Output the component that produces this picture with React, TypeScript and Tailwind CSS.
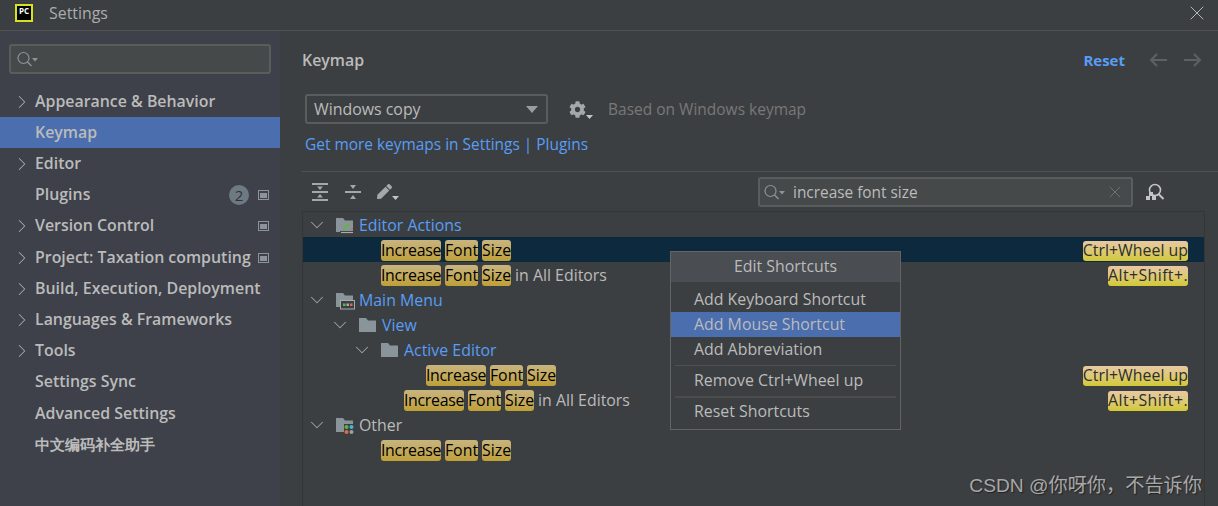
import { ChevronDown, ChevronRight, X } from "lucide-react";
import { FaCog, FaPen } from "react-icons/fa";

const font = { sans: "font-['Open_Sans',sans-serif]" };

const navItems = [
  { label: "Appearance & Behavior", arrow: true },
  { label: "Keymap", active: true },
  { label: "Editor", arrow: true },
  { label: "Plugins", badge: true, box: true },
  { label: "Version Control", arrow: true, box: true },
  { label: "Project: Taxation computing", arrow: true, box: true },
  { label: "Build, Execution, Deployment", arrow: true },
  { label: "Languages & Frameworks", arrow: true },
  { label: "Tools", arrow: true },
  { label: "Settings Sync" },
  { label: "Advanced Settings" },
  { label: "中文编码补全助手", cjk: true },
];

function SearchGlyph() {
  return (
    <svg width="24" height="18" viewBox="0 0 24 18" fill="none" className="shrink-0">
      <circle cx="7.5" cy="8" r="5.5" stroke="#8f9396" strokeWidth="1.2" />
      <path d="M11.5 12 15.5 16" stroke="#8f9396" strokeWidth="1.5" />
      <path d="M16 8h6l-3 3.5z" fill="#8f9396" />
    </svg>
  );
}

function BoxGlyph() {
  return (
    <svg width="11" height="10" viewBox="0 0 11 10" className="shrink-0">
      <rect x="0.5" y="0.5" width="10" height="9" fill="none" stroke="#8d9499" />
      <rect x="2" y="3" width="7" height="5" fill="#8d9499" />
    </svg>
  );
}

function Folder({ badge }: { badge?: "edit" | "menu" | "other" }) {
  return (
    <svg width="20" height="18" viewBox="0 0 20 18" className="shrink-0">
      <path d="M1 1h7l2 2.5h8V15H1z" fill="#8a949b" />
      {badge === "edit" && (
        <>
          <rect x="5" y="14" width="13" height="3.5" fill="#3c3f41" />
          <path d="M6 15.5h12" stroke="#a5acb1" strokeWidth="1.2" />
          <path d="M8 13 15 6" stroke="#62b543" strokeWidth="2" />
          <path d="M15 13h3v-2z" fill="#e0694a" />
        </>
      )}
      {badge === "menu" && (
        <>
          <rect x="5" y="8" width="15" height="10" fill="#3c3f41" />
          <rect x="5.5" y="8.5" width="14" height="8.5" fill="none" stroke="#a5acb1" />
          <rect x="8" y="11.5" width="2.5" height="2.5" fill="#62b543" />
          <rect x="11.5" y="11.5" width="2.5" height="2.5" fill="#a5acb1" />
          <rect x="15" y="11.5" width="2.5" height="2.5" fill="#e0694a" />
        </>
      )}
      {badge === "other" && (
        <>
          <rect x="9" y="7" width="11" height="11" fill="#3c3f41" />
          <circle cx="11.5" cy="10" r="2" fill="#62b543" />
          <circle cx="16.5" cy="10" r="2" fill="#40b6e0" />
          <circle cx="11.5" cy="15" r="2" fill="#e0694a" />
          <circle cx="16.5" cy="15" r="2" fill="#9aa0a4" />
        </>
      )}
    </svg>
  );
}

function Hit({ children, className }: { children: string; className: string }) {
  return (
    <span className={`flex h-[21px] items-center justify-center rounded-[3px] bg-gradient-to-b from-[#c8b47e] to-[#bfa035] text-black ${className}`}>
      {children}
    </span>
  );
}

function Match({ suffix }: { suffix?: string }) {
  return (
    <span className="flex items-center">
      <Hit className="w-[60px] tracking-[-0.3px]">Increase</Hit>
      <Hit className="ml-[4px] w-[33px]">Font</Hit>
      <Hit className="ml-[4px] w-[29px]">Size</Hit>
      {suffix && <span className="ml-[4px]">{suffix}</span>}
    </span>
  );
}

function Keys({ children }: { children: string }) {
  const wide = children.startsWith("Alt");
  return (
    <span
      className={`flex h-5 items-center rounded-[3px] bg-gradient-to-b from-[#e8c8a2] to-[#d2c92e] text-[#2e2e2e] ${wide ? "tracking-[0.4px]" : ""}`}
    >
      {children}
    </span>
  );
}

function Row({
  indent,
  selected,
  children,
  keys,
}: {
  indent: string;
  selected?: boolean;
  children: React.ReactNode;
  keys?: string;
}) {
  return (
    <div className={`flex h-[25px] items-center pr-4 pt-[2px] ${indent} ${selected ? "bg-[#0d293e]" : ""}`}>
      {children}
      {keys && (
        <span className="ml-auto">
          <Keys>{keys}</Keys>
        </span>
      )}
    </div>
  );
}

function Group({ folder, label, plain }: { folder?: "edit" | "menu" | "other"; label: string; plain?: boolean }) {
  return (
    <>
      <ChevronDown size={22} strokeWidth={1.1} className="mb-[2px] mr-[7px] shrink-0 text-[#a0a3a6]" />
      <Folder badge={folder} />
      <span className={`ml-[4px] ${plain ? "" : "text-[#589df6]"}`}>{label}</span>
    </>
  );
}

export default function App() {
  return (
    <div className={`flex h-[506px] w-[1218px] flex-col overflow-hidden bg-[#3c3f41] text-[15.9px] text-[#bbbbbb] ${font.sans}`}>
      <div className="flex h-[31px] shrink-0 items-center border-b border-[#515151] pb-[4px] pl-[15px] pr-[9px]">
        <div className="flex h-[18px] w-[18px] items-start border-2 border-[#d8e020] bg-black pl-[2px] pt-[1px] text-[8px] font-bold leading-[8px] text-white">
          PC
        </div>
        <span className="ml-4 pt-[2px] text-[#a9adb0]">Settings</span>
        <X size={24} strokeWidth={0.9} className="ml-auto text-[#c4c4c4]" />
      </div>

      <div className="relative flex min-h-0 flex-1">
        <div className="w-[280px] shrink-0 bg-[#3e4149] pt-[13px]">
          <div className="mx-[9px] flex h-[30px] items-center rounded-[3px] border-2 border-[#5a5d5e] bg-[#45494a] pl-[5px]">
            <SearchGlyph />
          </div>
          <div className="mt-[12px]">
            {navItems.map((item) => (
              <div
                key={item.label}
                className={`flex h-[31.2px] items-center pl-[14px] pr-[11px] font-semibold ${item.active ? "bg-[#4b6eaf]" : ""}`}
              >
                <span className="w-[21px] shrink-0">
                  {item.arrow && <ChevronRight size={22} strokeWidth={1.1} className="-ml-[3px] text-[#a5a8aa]" />}
                </span>
                <span className={`whitespace-nowrap ${item.cjk ? "text-[15px]" : ""}`}>{item.label}</span>
                <span className="ml-auto flex items-center gap-[9px]">
                  {item.badge && (
                    <span className="flex h-5 w-5 items-center justify-center rounded-full bg-[#6e7a83] text-[15px] font-normal text-[#2f3234]">
                      2
                    </span>
                  )}
                  {item.box && <BoxGlyph />}
                </span>
              </div>
            ))}
          </div>
        </div>

        <div className="min-w-0 flex-1 pl-[22px]">
          <div className="flex h-[63px] items-start pr-[16px] pt-[17px]">
            <span className="font-semibold leading-[24px]">Keymap</span>
            <span className="ml-auto text-[15px] font-bold leading-[24px] text-[#589df6]">Reset</span>
            <svg width="18" height="14" viewBox="0 0 18 14" className="ml-[24px] mt-[5px]" fill="none" stroke="#5e6163" strokeWidth="2">
              <path d="M18 7H2M8 1 2 7l6 6" />
            </svg>
            <svg width="18" height="14" viewBox="0 0 18 14" className="ml-[17px] mt-[5px]" fill="none" stroke="#5e6163" strokeWidth="2">
              <path d="M0 7h16M10 1l6 6-6 6" />
            </svg>
          </div>

          <div className="flex h-[30px] items-center pl-[3px]">
            <div className="flex h-[30px] w-[243px] items-center justify-between rounded-[3px] border-2 border-[#5a5d5e] px-[7px]">
              <span className="pt-[2px]">Windows copy</span>
              <svg width="12" height="7" viewBox="0 0 12 7" className="mr-[1px]">
                <path d="M0 0h12L6 7z" fill="#9a9da0" />
              </svg>
            </div>
            <FaCog size={17} className="ml-[21px] text-[#a5a8aa]" />
            <svg width="7" height="4" viewBox="0 0 7 4" className="mt-[15px]">
              <path d="M0 0h7L3.5 4z" fill="#c4c4c4" />
            </svg>
            <span className="ml-[15px] pt-[2px] text-[15.5px] text-[#787878]">Based on Windows keymap</span>
          </div>

          <div className="mt-[10px] pl-[3px] text-[15.45px] leading-[21px] text-[#589df6]">Get more keymaps in Settings | Plugins</div>

          <div className="mt-[16px] flex h-[40px] items-center border-t border-[#515151] pl-[10px] pr-[53px]">
            <svg width="16" height="18" viewBox="0 0 16 18" fill="#a5a8aa">
              <path d="M0 0h16v2H0zM0 16h16v2H0zM0 8h16v2H0zM5 3.5h6L8 7zM5 14.5h6L8 11z" />
            </svg>
            <svg width="16" height="16" viewBox="0 0 16 16" fill="#a5a8aa" className="ml-[17px]">
              <path d="M0 7h16v2H0zM5 1h6L8 5zM5 15h6L8 11z" />
            </svg>
            <FaPen size={15} className="ml-[16px] text-[#a5a8aa]" />
            <svg width="7" height="4" viewBox="0 0 7 4" className="mt-[13px]">
              <path d="M0 0h7L3.5 4z" fill="#c4c4c4" />
            </svg>
            <div className="ml-auto flex h-[30px] w-[375px] items-center rounded-[3px] border-2 border-[#5a5d5e] bg-[#45494a] pl-[3px] pr-[6px]">
              <SearchGlyph />
              <span className="ml-[6px] pt-[2px] text-[15.4px] text-[#bbbbbb]">increase font size</span>
              <X size={20} strokeWidth={1} className="ml-auto text-[#787878]" />
            </div>
            <svg width="20" height="18" viewBox="0 0 20 18" className="ml-[12px]" fill="none">
              <circle cx="10" cy="7" r="5.5" stroke="#c4c4c4" strokeWidth="1.6" />
              <path d="m13.5 11 5 5" stroke="#c4c4c4" strokeWidth="2" />
              <path d="M1 13h4v4H1zM7 13h4v4H7zM4 9h4v4H4z" fill="#c4c4c4" />
            </svg>
          </div>

          <div className="mr-[13px] h-[300px] border-l border-r border-t border-[#333537]">
            <Row indent="pl-[3px]">
              <Group folder="edit" label="Editor Actions" />
            </Row>
            <Row indent="pl-[78px]" selected keys="Ctrl+Wheel up">
              <Match />
            </Row>
            <Row indent="pl-[78px]" keys="Alt+Shift+.">
              <Match suffix="in All Editors" />
            </Row>
            <Row indent="pl-[3px]">
              <Group folder="menu" label="Main Menu" />
            </Row>
            <Row indent="pl-[26px]">
              <Group label="View" />
            </Row>
            <Row indent="pl-[48px]">
              <Group label="Active Editor" />
            </Row>
            <Row indent="pl-[123px]" keys="Ctrl+Wheel up">
              <Match />
            </Row>
            <Row indent="pl-[101px]" keys="Alt+Shift+.">
              <Match suffix="in All Editors" />
            </Row>
            <Row indent="pl-[3px]">
              <Group folder="other" label="Other" plain />
            </Row>
            <Row indent="pl-[78px]">
              <Match />
            </Row>
          </div>
        </div>

        <div className="absolute left-[670px] top-[220px] w-[231px] border border-[#646464] bg-[#3c3f41]">
          <div className="flex h-[30px] items-center justify-center bg-[#4a4d52]">Edit Shortcuts</div>
          <div className="pt-[5px]">
            <div className="flex h-[25px] items-center pl-[23px]">Add Keyboard Shortcut</div>
            <div className="flex h-[25px] items-center bg-[#4b6eaf] pl-[23px]">Add Mouse Shortcut</div>
            <div className="flex h-[25px] items-center pl-[23px]">Add Abbreviation</div>
            <div className="mx-[4px] mt-[3px] border-t border-[#515151]" />
            <div className="flex h-[30px] items-center pl-[23px]">Remove Ctrl+Wheel up</div>
            <div className="mx-[4px] border-t-2 border-[#4c4c4c]" />
            <div className="flex h-[31px] items-center pb-[4px] pl-[23px]">Reset Shortcuts</div>
          </div>
        </div>

        <span className="absolute right-[16px] top-[442px] font-['Liberation_Sans','Noto_Sans_CJK_SC',sans-serif] text-[19.2px] leading-[26px] text-[#a8a8a8] [text-shadow:1px_1px_1px_#222]">
          CSDN @你呀你，不告诉你
        </span>
      </div>
    </div>
  );
}
